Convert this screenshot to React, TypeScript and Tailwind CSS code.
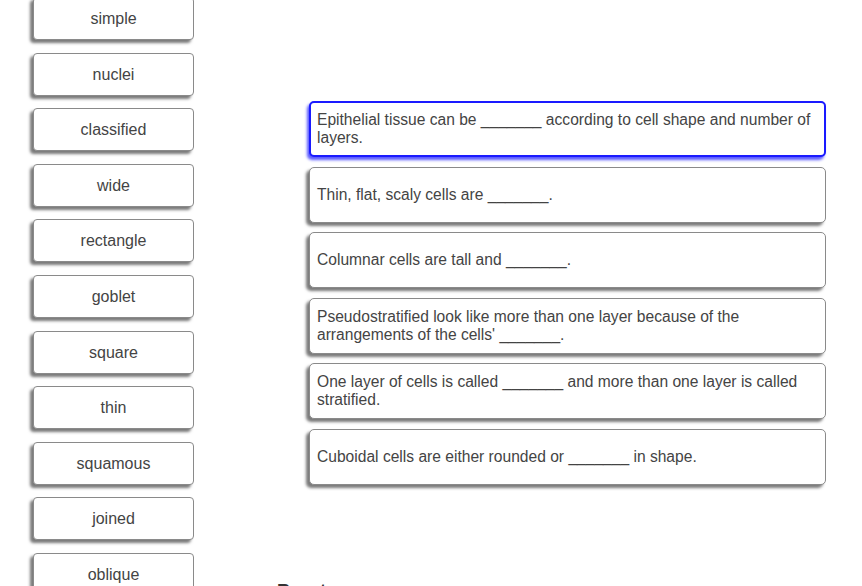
import React from "react";

const words = [
  "simple",
  "nuclei",
  "classified",
  "wide",
  "rectangle",
  "goblet",
  "square",
  "thin",
  "squamous",
  "joined",
  "oblique",
];

const sentences = [
  "Epithelial tissue can be _______ according to cell shape and number of layers.",
  "Thin, flat, scaly cells are _______.",
  "Columnar cells are tall and _______.",
  "Pseudostratified look like more than one layer because of the arrangements of the cells' _______.",
  "One layer of cells is called _______ and more than one layer is called stratified.",
  "Cuboidal cells are either rounded or _______ in shape.",
];

export default function App() {
  return (
    <div
      className="relative h-[586px] w-[862px] overflow-hidden bg-white"
      style={{ fontFamily: '"Liberation Sans", Arial, sans-serif' }}
    >
      <div className="flex">
        {/* Word bank */}
        <div className="ml-[33px] -mt-[3px] flex w-[161px] flex-col gap-[12.6px]">
          {words.map((w) => (
            <div
              key={w}
              className="flex h-[43px] items-center justify-center rounded-[4px] border border-[#8a8a8a] bg-white pt-[1px] text-[16px] text-[#444] shadow-[-3px_3px_3px_#7a7a7a]"
            >
              {w}
            </div>
          ))}
        </div>

        {/* Sentences */}
        <div className="ml-[115px] mt-[101px] flex w-[517px] flex-col gap-[9.6px]">
          {sentences.map((s, i) => (
            <div
              key={i}
              className={
                i === 0
                  ? "flex h-[56px] items-center rounded-[5px] border-2 border-[#1a1aff] bg-white pl-[6px] pr-[8px] text-[15.6px] leading-[18px] text-[#444] shadow-[-2px_3px_3px_#5a5aff]"
                  : "flex h-[56px] items-center rounded-[5px] border border-[#8a8a8a] bg-white pl-[7px] pr-[9px] text-[15.6px] leading-[18px] text-[#444] shadow-[-3px_3px_3px_#7a7a7a]"
              }
            >
              <span>{s}</span>
            </div>
          ))}
        </div>
      </div>

      <div className="absolute left-[277px] top-[578px] text-[18px] font-bold text-[#333]">
        Reset
      </div>
    </div>
  );
}
